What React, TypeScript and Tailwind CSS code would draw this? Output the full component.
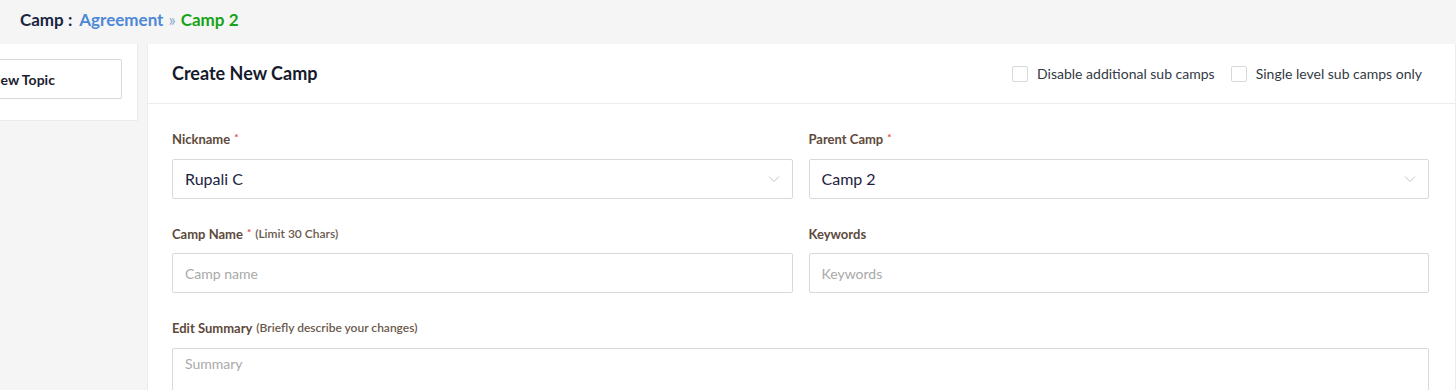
import React from "react";

const font = { fontFamily: "Lato, 'Open Sans', sans-serif" };

const Label = ({
  text,
  required,
  hint,
}: {
  text: string;
  required?: boolean;
  hint?: string;
}) => (
  <div className="h-5 mb-[10px] flex items-center text-[13px] font-bold text-[#5e4a3c] leading-5">
    <span>{text}</span>
    {required && <span className="text-[#e5484d] text-[10px] ml-1 -mt-1">*</span>}
    {hint && <span className="ml-1 text-[12px] font-semibold text-[#6b5a4d]">{hint}</span>}
  </div>
);

const Chevron = () => (
  <svg width="12" height="8" viewBox="0 0 12 8" fill="none" className="shrink-0">
    <path d="M1 1.5 L6 6.5 L11 1.5" stroke="#c4c4c4" strokeWidth="1" />
  </svg>
);

const SelectBox = ({ value }: { value: string }) => (
  <div className="h-10 border border-[#d9d9d9] rounded-[2px] bg-white flex items-center justify-between pl-3 pr-3">
    <span className="text-[16px] text-[#1d2442]">{value}</span>
    <Chevron />
  </div>
);

const InputBox = ({ placeholder }: { placeholder: string }) => (
  <div className="h-10 border border-[#d9d9d9] rounded-[2px] bg-white flex items-center pl-3">
    <span className="text-[14px] text-[#a9a9a9]">{placeholder}</span>
  </div>
);

const CheckItem = ({ text }: { text: string }) => (
  <label className="flex items-center gap-[9px]">
    <span className="w-4 h-4 border border-[#d9d9d9] rounded-[2px] bg-white" />
    <span className="text-[14px] text-[#333a45]">{text}</span>
  </label>
);

export default function App() {
  return (
    <div className="min-h-[390px] bg-[#f5f5f5] overflow-hidden" style={font}>
      <div className="h-11 flex items-center pl-5 pb-[5px] text-[17px] font-bold">
        <span className="text-[#1b2540]">Camp :</span>
        <span className="ml-[7px] text-[#4d88d6]">Agreement</span>
        <span className="mx-[5px] text-[#8aa6cc] font-normal">»</span>
        <span className="text-[#17a317]">Camp 2</span>
      </div>

      <div className="flex items-start">
        <div className="w-[138px] shrink-0 bg-white border-r border-b border-[#ebebeb] pt-[15px] pb-[21px] overflow-hidden">
          <div className="ml-[-100px] w-[222px] h-10 border border-[#d9d9d9] rounded-[2px] flex items-center pl-[89px] text-[14px] font-bold text-[#1b2030]">
            New Topic
          </div>
        </div>

        <div className="ml-[9px] flex-1 bg-white border-l border-r border-[#ececec] min-h-[346px]">
          <div className="h-[60px] border-b border-[#ececec] flex items-center justify-between pl-6 pr-[33px]">
            <h2 className="text-[18px] font-bold text-[#151b2c]">Create New Camp</h2>
            <div className="flex items-center gap-4">
              <CheckItem text="Disable additional sub camps" />
              <CheckItem text="Single level sub camps only" />
            </div>
          </div>

          <div className="pl-6 pr-[26px] pt-[25px] grid grid-cols-2 gap-x-[16px]">
            <div>
              <Label text="Nickname" required />
              <SelectBox value="Rupali C" />
            </div>
            <div>
              <Label text="Parent Camp" required />
              <SelectBox value="Camp 2" />
            </div>

            <div className="mt-[25px]">
              <Label text="Camp Name" required hint="(Limit 30 Chars)" />
              <div className="-mt-px">
                <InputBox placeholder="Camp name" />
              </div>
            </div>
            <div className="mt-[25px]">
              <Label text="Keywords" />
              <div className="-mt-px">
                <InputBox placeholder="Keywords" />
              </div>
            </div>

            <div className="col-span-2 mt-[25px]">
              <Label text="Edit Summary" hint="(Briefly describe your changes)" />
              <div className="h-20 border border-[#d9d9d9] rounded-[2px] bg-white pl-3 pt-[2px]">
                <span className="text-[14px] text-[#a9a9a9]">Summary</span>
              </div>
            </div>
          </div>
        </div>
      </div>
    </div>
  );
}
